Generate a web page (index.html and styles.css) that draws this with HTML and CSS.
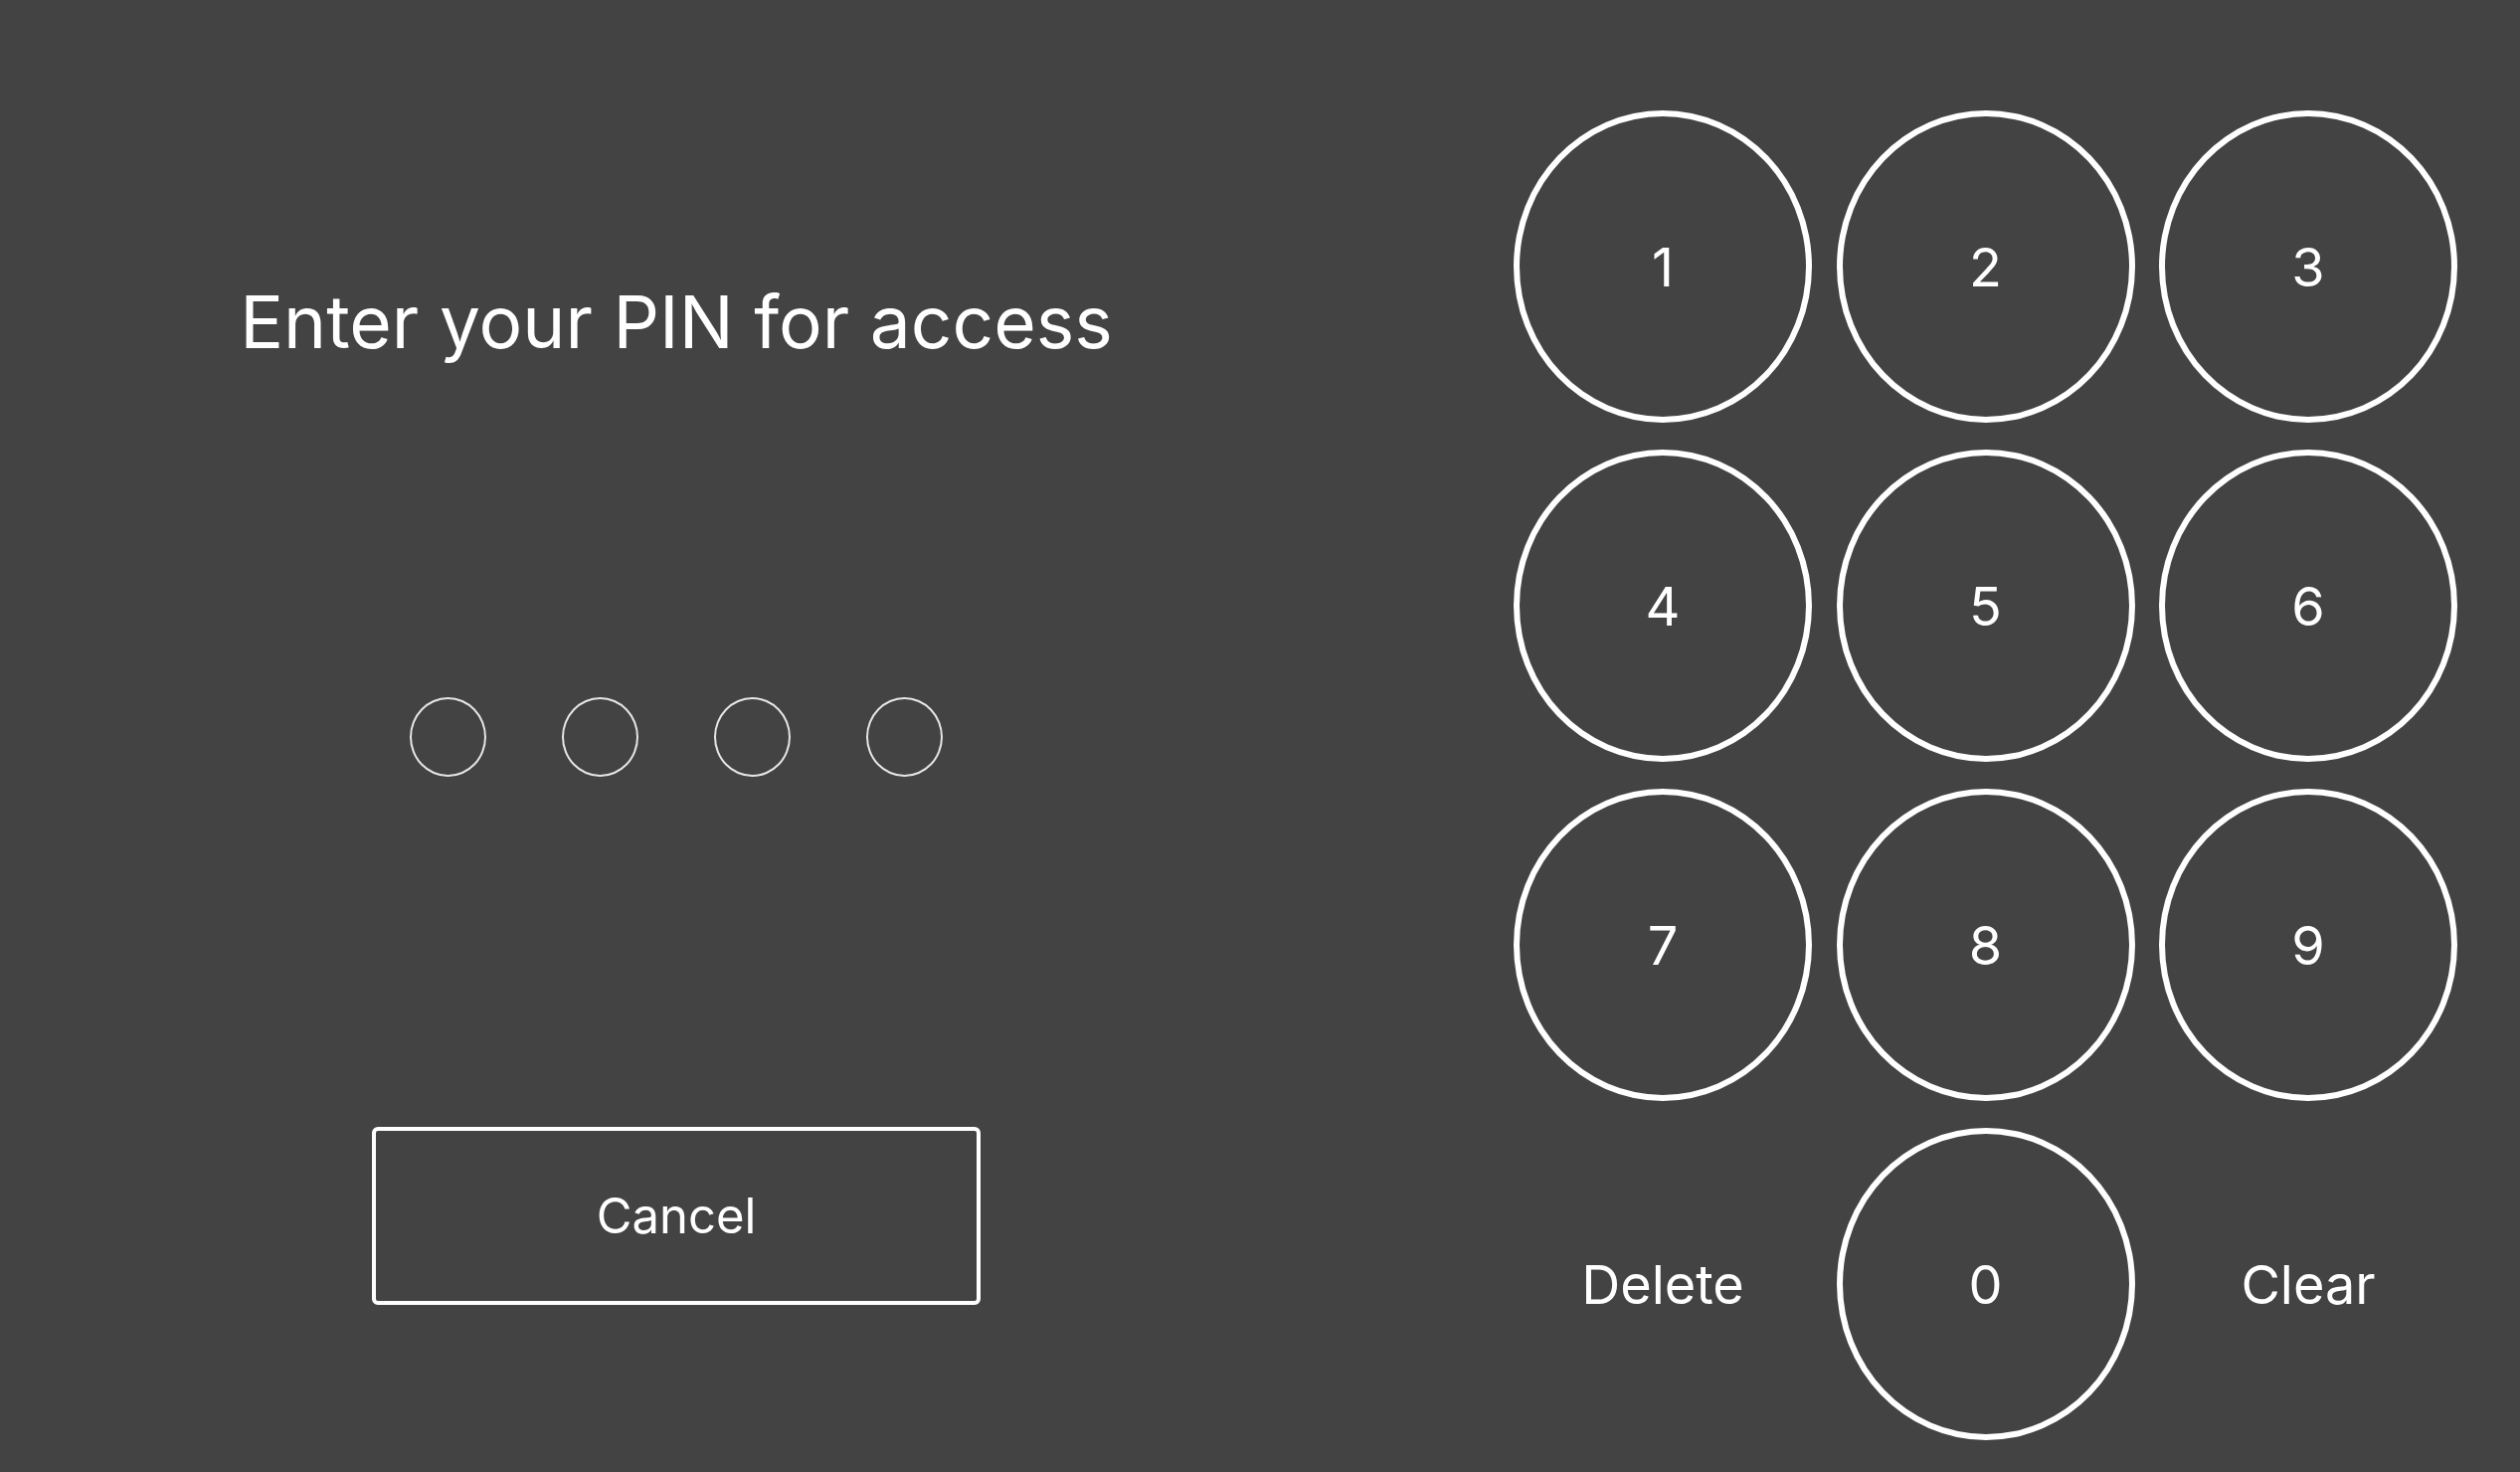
FILE: index.html
```html
<!DOCTYPE html>
<html lang="en">
<head>
<meta charset="utf-8">
<title>Enter PIN</title>
<link rel="stylesheet" href="styles.css">
</head>
<body>
<div class="screen">
  <section class="entry">
    <h1 class="title">Enter your PIN for access</h1>
    <div class="dots">
      <span class="dot"></span>
      <span class="dot"></span>
      <span class="dot"></span>
      <span class="dot"></span>
    </div>
    <button class="cancel">Cancel</button>
  </section>
  <section class="keypad">
    <button class="key">1</button>
    <button class="key">2</button>
    <button class="key">3</button>
    <button class="key">4</button>
    <button class="key">5</button>
    <button class="key">6</button>
    <button class="key">7</button>
    <button class="key">8</button>
    <button class="key">9</button>
    <button class="action">Delete</button>
    <button class="key">0</button>
    <button class="action">Clear</button>
  </section>
</div>
</body>
</html>
```
FILE: styles.css
```css
html, body {
  margin: 0;
  padding: 0;
  background: #434343;
}
body {
  font-family: "Inter", "Liberation Sans", sans-serif;
  color: #ffffff;
}
.screen {
  display: flex;
  width: 2534px;
  height: 1480px;
  box-sizing: border-box;
}
.entry {
  width: 1360px;
  display: flex;
  flex-direction: column;
  align-items: center;
}
.title {
  margin: 287px 0 0;
  font-size: 73px;
  line-height: 1;
  font-weight: 400;
  color: #ffffff;
  white-space: nowrap;
}
.dots {
  margin-top: 341px;
  display: flex;
  gap: 76px;
}
.dot {
  display: block;
  width: 77px;
  height: 80px;
  box-sizing: border-box;
  border: 2.5px solid #e6e6e6;
  border-radius: 50%;
}
.cancel {
  margin-top: 352px;
  width: 612px;
  height: 179px;
  box-sizing: border-box;
  border: 4px solid #ffffff;
  border-radius: 6px;
  background: transparent;
  color: #ffffff;
  font-family: "Inter", "Liberation Sans", sans-serif;
  font-size: 49px;
  padding: 0;
}
.keypad {
  margin-left: 162px;
  padding-top: 111px;
  display: grid;
  grid-template-columns: repeat(3, 300px);
  grid-auto-rows: 314px;
  column-gap: 24.5px;
  row-gap: 27px;
  align-content: start;
}
.key, .action {
  width: 300px;
  height: 314px;
  padding: 0;
  background: transparent;
  color: #ffffff;
  font-family: "Inter", "Liberation Sans", sans-serif;
  font-size: 54px;
  display: flex;
  align-items: center;
  justify-content: center;
}
.key {
  box-sizing: border-box;
  border: 6px solid #ffffff;
  border-radius: 50%;
}
.action {
  border: none;
}
```
